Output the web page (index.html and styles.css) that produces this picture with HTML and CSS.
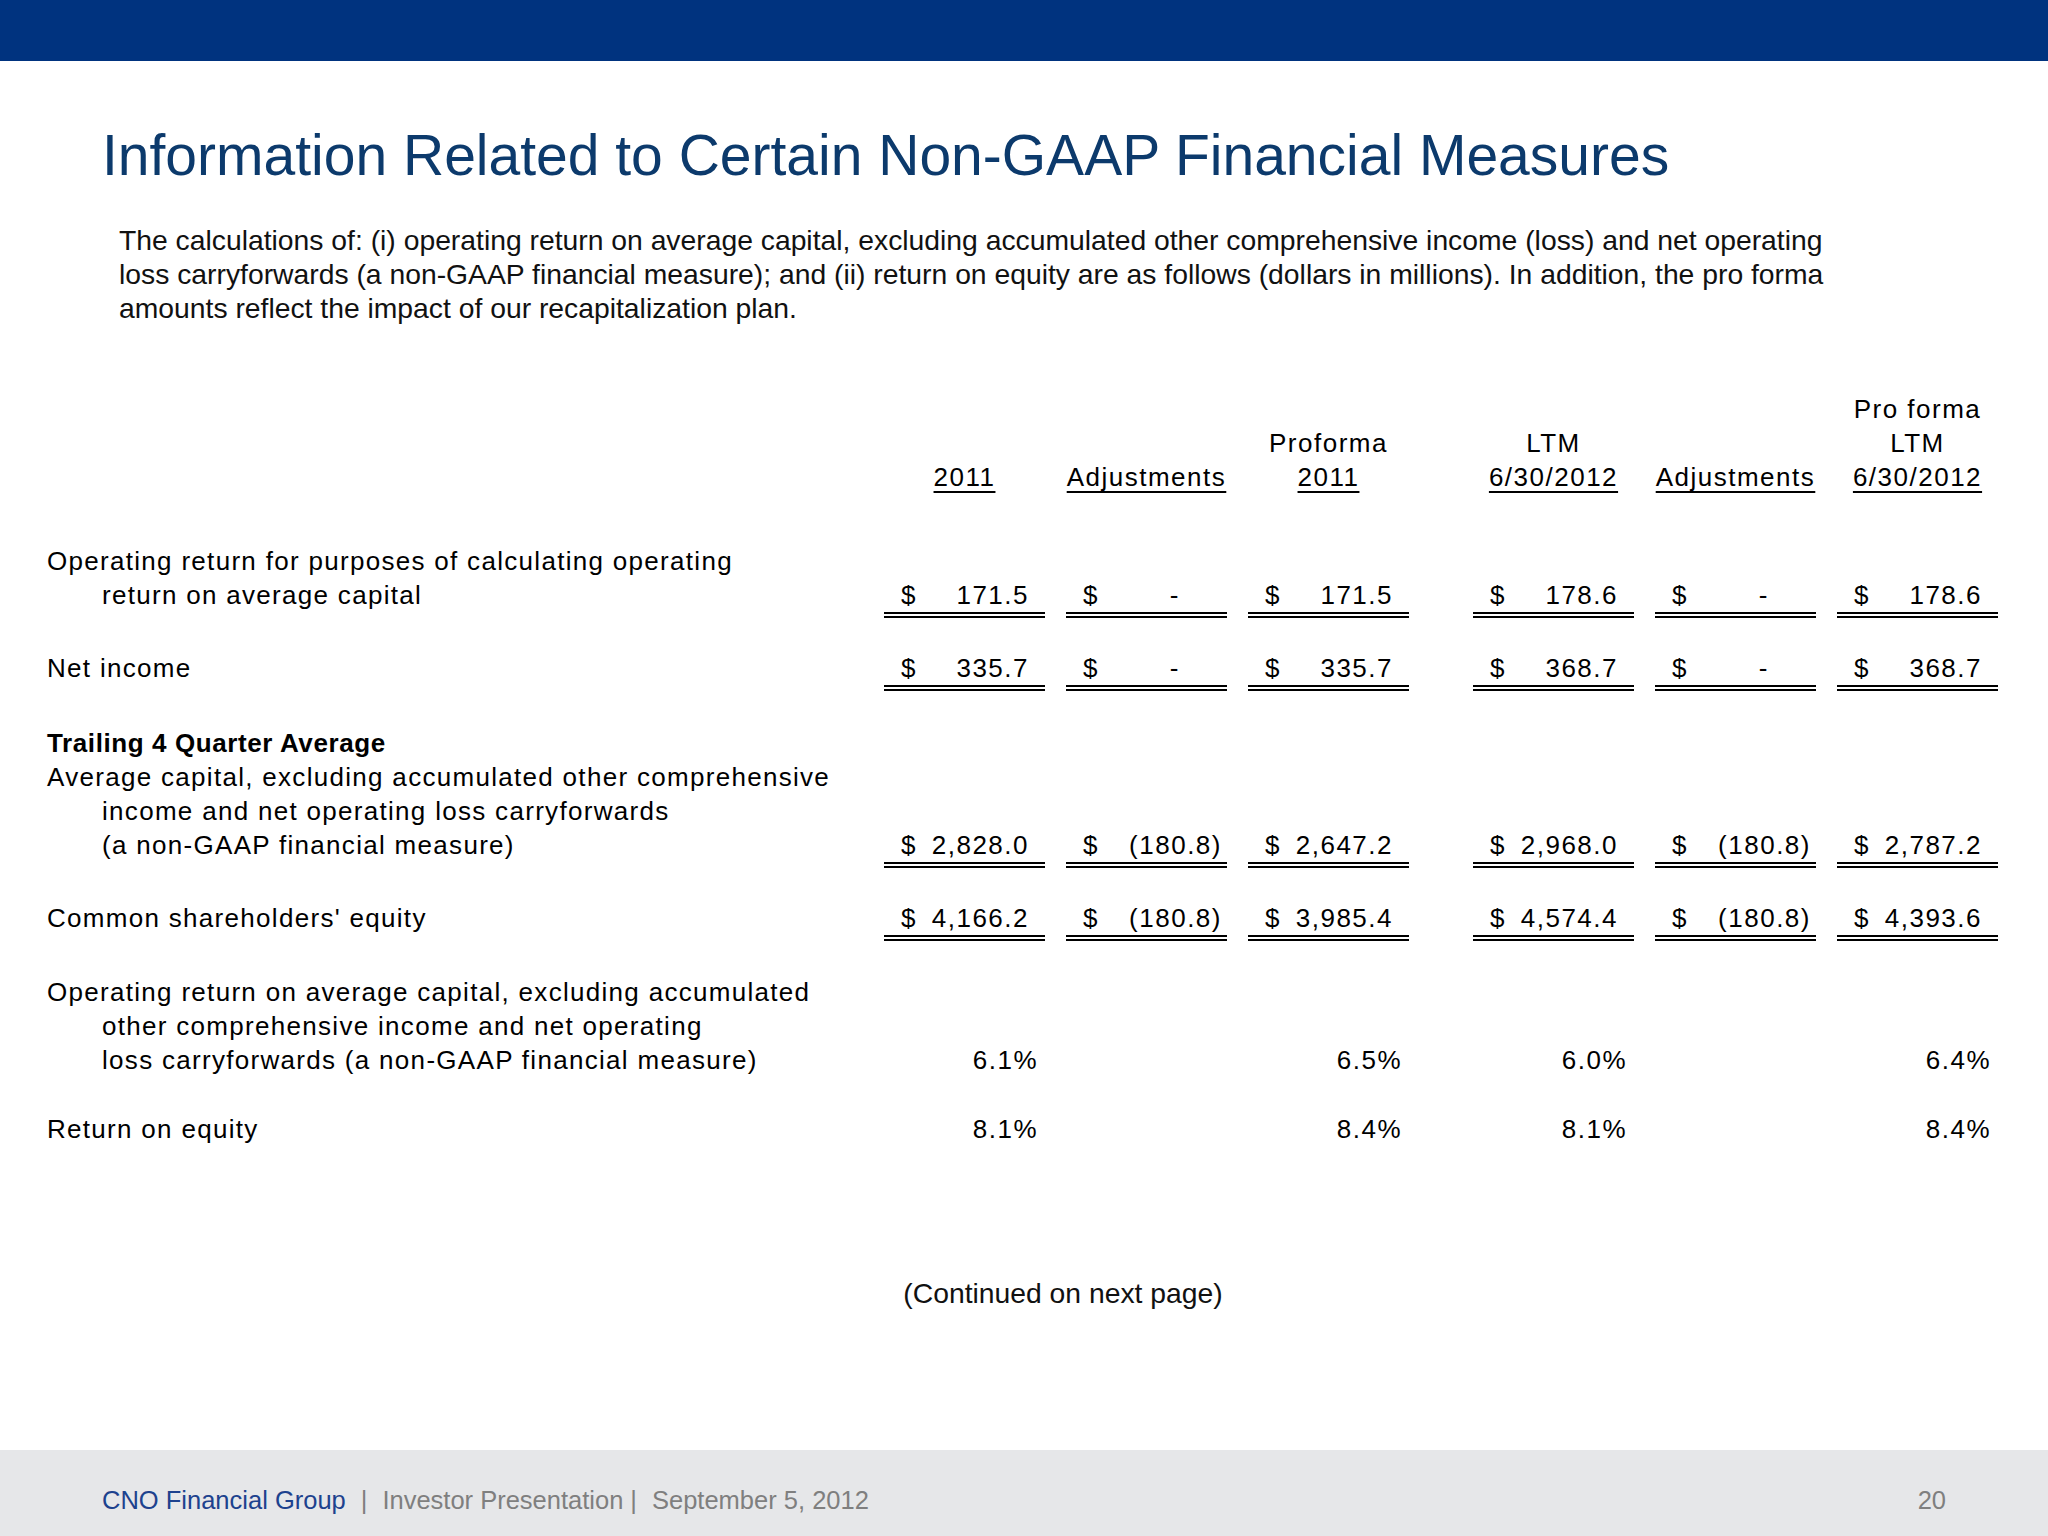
FILE: index.html
```html
<!DOCTYPE html>
<html lang="en">
<head>
<meta charset="utf-8">
<title>Information Related to Certain Non-GAAP Financial Measures</title>
<link rel="stylesheet" href="styles.css">
</head>
<body>
<div class="slide">
  <header class="topbar"></header>
  <h1 class="title">Information Related to Certain Non-GAAP Financial Measures</h1>
  <p class="intro">The calculations of: (i) operating return on average capital, excluding accumulated other comprehensive income (loss) and net operating<br>loss carryforwards (a non-GAAP financial measure); and (ii) return on equity are as follows (dollars in millions). In addition, the pro forma<br>amounts reflect the impact of our recapitalization plan.</p>

  <section class="fin">
    <div class="row head">
      <div class="label"></div>
      <div class="hd"><span class="ul">2011</span></div>
      <div class="hd"><span class="ul">Adjustments</span></div>
      <div class="hd">Proforma<br><span class="ul">2011</span></div>
      <div class="sp"></div>
      <div class="hd">LTM<br><span class="ul">6/30/2012</span></div>
      <div class="hd"><span class="ul">Adjustments</span></div>
      <div class="hd">Pro forma<br>LTM<br><span class="ul">6/30/2012</span></div>
    </div>

    <div class="row money r1">
      <div class="label">Operating return for purposes of calculating operating<br><span class="ind">return on average capital</span></div>
      <div class="v"><span class="cur">$</span><span class="num">171.5</span></div>
      <div class="v"><span class="cur">$</span><span class="num nil">-</span></div>
      <div class="v"><span class="cur">$</span><span class="num">171.5</span></div>
      <div class="sp"></div>
      <div class="v"><span class="cur">$</span><span class="num">178.6</span></div>
      <div class="v"><span class="cur">$</span><span class="num nil">-</span></div>
      <div class="v"><span class="cur">$</span><span class="num">178.6</span></div>
    </div>

    <div class="row money r2">
      <div class="label">Net income</div>
      <div class="v"><span class="cur">$</span><span class="num">335.7</span></div>
      <div class="v"><span class="cur">$</span><span class="num nil">-</span></div>
      <div class="v"><span class="cur">$</span><span class="num">335.7</span></div>
      <div class="sp"></div>
      <div class="v"><span class="cur">$</span><span class="num">368.7</span></div>
      <div class="v"><span class="cur">$</span><span class="num nil">-</span></div>
      <div class="v"><span class="cur">$</span><span class="num">368.7</span></div>
    </div>

    <div class="row money r3">
      <div class="label"><b>Trailing 4 Quarter Average</b><br>Average capital, excluding accumulated other comprehensive<br><span class="ind">income and net operating loss carryforwards</span><br><span class="ind">(a non-GAAP financial measure)</span></div>
      <div class="v"><span class="cur">$</span><span class="num">2,828.0</span></div>
      <div class="v"><span class="cur">$</span><span class="num neg">(180.8)</span></div>
      <div class="v"><span class="cur">$</span><span class="num">2,647.2</span></div>
      <div class="sp"></div>
      <div class="v"><span class="cur">$</span><span class="num">2,968.0</span></div>
      <div class="v"><span class="cur">$</span><span class="num neg">(180.8)</span></div>
      <div class="v"><span class="cur">$</span><span class="num">2,787.2</span></div>
    </div>

    <div class="row money r4">
      <div class="label">Common shareholders' equity</div>
      <div class="v"><span class="cur">$</span><span class="num">4,166.2</span></div>
      <div class="v"><span class="cur">$</span><span class="num neg">(180.8)</span></div>
      <div class="v"><span class="cur">$</span><span class="num">3,985.4</span></div>
      <div class="sp"></div>
      <div class="v"><span class="cur">$</span><span class="num">4,574.4</span></div>
      <div class="v"><span class="cur">$</span><span class="num neg">(180.8)</span></div>
      <div class="v"><span class="cur">$</span><span class="num">4,393.6</span></div>
    </div>

    <div class="row pct r5">
      <div class="label">Operating return on average capital, excluding accumulated<br><span class="ind">other comprehensive income and net operating</span><br><span class="ind">loss carryforwards (a non-GAAP financial measure)</span></div>
      <div class="p">6.1%</div>
      <div class="p"></div>
      <div class="p">6.5%</div>
      <div class="sp"></div>
      <div class="p">6.0%</div>
      <div class="p"></div>
      <div class="p">6.4%</div>
    </div>

    <div class="row pct r6">
      <div class="label">Return on equity</div>
      <div class="p">8.1%</div>
      <div class="p"></div>
      <div class="p">8.4%</div>
      <div class="sp"></div>
      <div class="p">8.1%</div>
      <div class="p"></div>
      <div class="p">8.4%</div>
    </div>
  </section>

  <p class="cont">(Continued on next page)</p>

  <footer class="footer">
    <div class="foot-left"><span class="brand">CNO Financial Group</span><span class="sep s1">|</span><span>Investor Presentation</span><span class="sep s2">|</span><span>September 5, 2012</span></div>
    <div class="page">20</div>
  </footer>
</div>
</body>
</html>
```

FILE: styles.css
```css
html, body {
  margin: 0;
  padding: 0;
  background: #ffffff;
}

.slide {
  width: 2048px;
  height: 1536px;
  overflow: hidden;
  display: flex;
  flex-direction: column;
  font-family: "Liberation Sans", Arial, sans-serif;
  color: #000;
}

.topbar {
  height: 61px;
  flex: 0 0 61px;
  background: #00337f;
}

.title {
  margin: 62px 0 0 0;
  padding-left: 102px;
  font-size: 57px;
  line-height: 64px;
  font-weight: normal;
  color: #0c3a6c;
  white-space: nowrap;
}

.intro {
  margin: 36px 0 0 0;
  padding-left: 119px;
  font-size: 28.3px;
  line-height: 34px;
  color: #111;
  white-space: nowrap;
}

.fin {
  margin-top: 67px;
  padding-left: 47px;
  font-size: 26px;
  line-height: 34px;
  letter-spacing: 1.3px;
  display: flex;
  flex-direction: column;
}

.row {
  display: grid;
  grid-template-columns: 816px 161px 161px 161px 22px 161px 161px 161px;
  column-gap: 21px;
  align-items: end;
}

.label {
  white-space: nowrap;
}

.label b {
  font-weight: bold;
  letter-spacing: 0.6px;
}

.ind {
  padding-left: 55px;
}

.hd {
  text-align: center;
  white-space: nowrap;
  letter-spacing: 1.5px;
}

.ul {
  text-decoration: underline;
  text-decoration-thickness: 2px;
  text-underline-offset: 5px;
}

.money .label {
  padding-bottom: 6px;
}

.v {
  display: flex;
  justify-content: space-between;
  border-bottom: 6px double #000;
  white-space: nowrap;
  letter-spacing: 1.5px;
}

.cur {
  padding-left: 17px;
}

.num {
  padding-right: 16px;
}

.num.neg {
  padding-right: 5px;
}

.num.nil {
  padding-right: 47px;
}

.p {
  text-align: right;
  padding-right: 7px;
  letter-spacing: 1.5px;
}

.r1 { margin-top: 50px; }
.r2 { margin-top: 33px; }
.r3 { margin-top: 35px; }
.r4 { margin-top: 33px; }
.r5 { margin-top: 34px; }
.r6 { margin-top: 35px; }

.cont {
  margin: 130px 0 0 0;
  text-align: center;
  font-size: 28.3px;
  line-height: 34px;
  padding-left: 78px;
  color: #111;
}

.footer {
  margin-top: auto;
  height: 86px;
  flex: 0 0 86px;
  background: #e6e7e9;
  display: flex;
  justify-content: space-between;
  align-items: flex-start;
  box-sizing: border-box;
  padding: 35px 102px 0 102px;
  font-size: 25.5px;
  line-height: 30px;
  color: #7f7f7f;
}

.brand {
  color: #1d428e;
}

.sep.s1 {
  margin: 0 15px 0 15px;
}

.sep.s2 {
  margin: 0 15px 0 7px;
}
```
